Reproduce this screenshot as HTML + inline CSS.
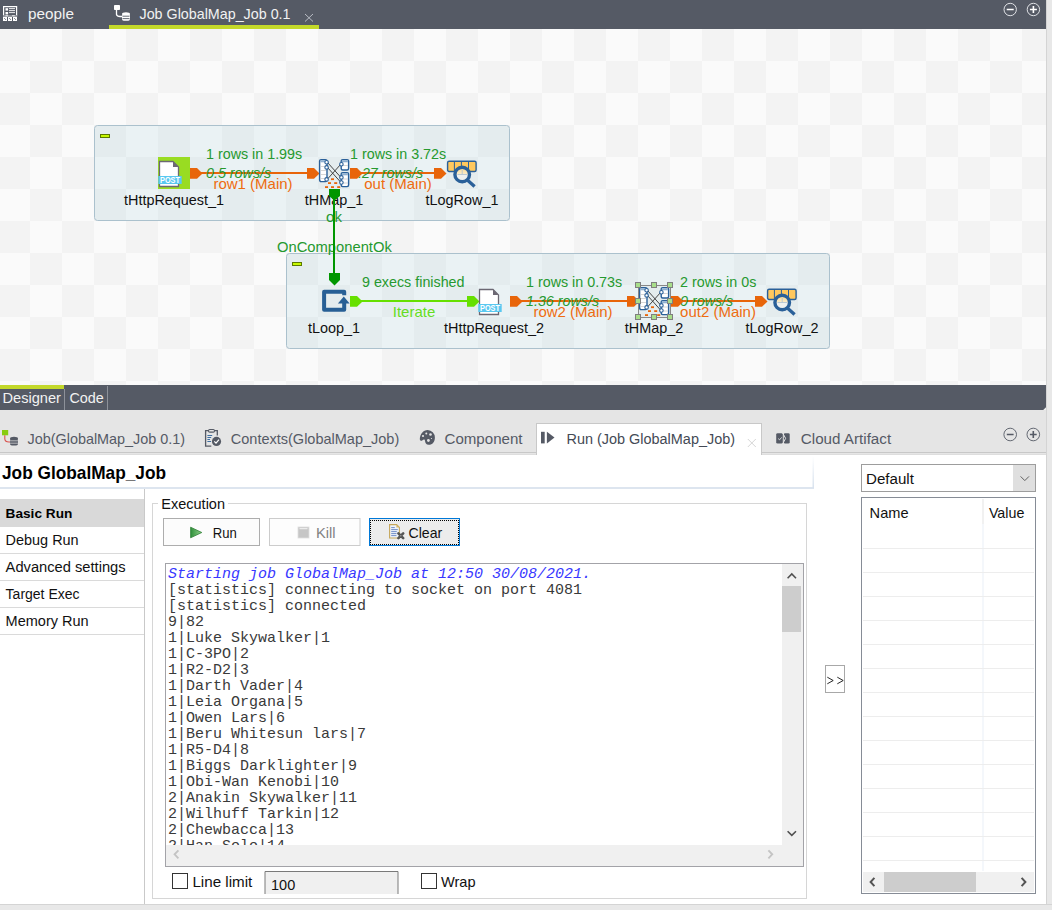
<!DOCTYPE html>
<html><head><meta charset="utf-8">
<style>
*{margin:0;padding:0;box-sizing:border-box}
html,body{width:1052px;height:910px;overflow:hidden;background:#e6e6e6;font-family:"Liberation Sans",sans-serif;position:relative}
.a{position:absolute}
.t{position:absolute;white-space:nowrap;line-height:1}
svg{position:absolute;overflow:visible}
</style></head><body>

<!-- top editor tab bar -->
<div class="a" style="left:0;top:0;width:1046px;height:29px;background:#555a65"></div>
<div class="a" style="left:109px;top:25px;width:210px;height:4px;background:#c3d82a"></div>

<!-- canvas -->
<svg style="left:0;top:29px" width="1046" height="356">
  <defs><pattern id="chk" x="-2" y="0" width="64" height="64" patternUnits="userSpaceOnUse">
    <rect width="64" height="64" fill="#fafafa"/>
    <rect width="32" height="32" fill="#f3f3f3"/><rect x="32" y="32" width="32" height="32" fill="#f3f3f3"/>
  </pattern></defs>
  <rect width="1046" height="356" fill="url(#chk)" shape-rendering="crispEdges"/>
</svg>

<!-- diagram -->
<svg style="left:0;top:0" width="1052" height="910" viewBox="0 0 1052 910">
<g font-family="Liberation Sans">
<!-- subjobs -->
<rect x="94.5" y="125.5" width="415" height="95" rx="3" fill="rgba(172,210,222,0.2)" stroke="#abc1cd"/>
<rect x="100.5" y="134.5" width="9" height="3" fill="#c6f800" stroke="#5c7a00"/>
<rect x="286.5" y="253.5" width="543" height="95" rx="3" fill="rgba(172,210,222,0.2)" stroke="#abc1cd"/>
<rect x="292.5" y="262.5" width="9" height="3" fill="#c6f800" stroke="#5c7a00"/>

<g fill="#e8650a"><rect x="197" y="172" width="115" height="2"/><rect x="357" y="172" width="84" height="2"/><rect x="517" y="300" width="115" height="2"/><rect x="677" y="300" width="84" height="2"/></g>
<g fill="#66e000"><rect x="357" y="300" width="116" height="2"/></g>
<!-- labels row1 -->
<g font-size="14.3" fill="#26992f">
<text x="206" y="159">1 rows in 1.99s</text>
<text x="206" y="178" font-style="italic">0.5 rows/s</text>
<text x="350" y="159">1 rows in 3.72s</text>
<text x="350" y="178" font-style="italic">0.27 rows/s</text>
<text x="362" y="287">9 execs finished</text>
<text x="526" y="287">1 rows in 0.73s</text>
<text x="526" y="306" font-style="italic">1.36 rows/s</text>
<text x="680" y="287">2 rows in 0s</text>
<text x="680" y="306" font-style="italic">0 rows/s</text>
<text x="277" y="252" font-size="14.75">OnComponentOk</text>
<text x="334" y="222" font-size="15" text-anchor="middle">ok</text>
</g>
<g font-size="15" fill="#ee6c10" text-anchor="middle">
<text x="253" y="189">row1 (Main)</text>
<text x="398" y="189">out (Main)</text>
<text x="573" y="317">row2 (Main)</text>
<text x="718" y="317">out2 (Main)</text>
</g>
<text x="414" y="317" font-size="15" fill="#66dd22" text-anchor="middle">Iterate</text>
<g font-size="14.4" fill="#111" text-anchor="middle">
<text x="174" y="205">tHttpRequest_1</text>
<text x="334" y="205">tHMap_1</text>
<text x="462" y="205">tLogRow_1</text>
<text x="334" y="333">tLoop_1</text>
<text x="494" y="333">tHttpRequest_2</text>
<text x="654" y="333">tHMap_2</text>
<text x="782" y="333">tLogRow_2</text>
</g>

<!-- connections -->
<g fill="#e8650a" stroke="none">
<path d="M190 168H197L202.5 173.4L197 178.8H190Z"/>
<path d="M307 168H314L319.5 173.4L314 178.8H307Z"/>
<path d="M350 168H357L362.5 173.4L357 178.8H350Z"/>
<path d="M434 168H441L446.5 173.4L441 178.8H434Z"/>
<path d="M510 296H517L522.5 301.4L517 306.8H510Z"/>
<path d="M627 296H634L639.5 301.4L634 306.8H627Z"/>
<path d="M671 296H678L683.5 301.4L678 306.8H671Z"/>
<path d="M755 296H762L767.5 301.4L762 306.8H755Z"/>
</g>
<g fill="#66e000">
<path d="M350 296H357L362.5 301.4L357 306.8H350Z"/>
<path d="M467 296H474L479.5 301.4L474 306.8H467Z"/>
</g>
<g fill="#009600">
<rect x="333" y="196" width="2" height="80"/>
<path d="M329 189H340V196L334.5 200.5L329 196Z"/>
<path d="M329 273H340V280L334.5 285.5L329 280Z"/>
</g>
</g>
</svg>

<!-- component icons -->
<svg style="left:0;top:0" width="1052" height="910" viewBox="0 0 1052 910">
<defs>
<g id="doc">
  <path d="M1.5 4.5H15L20.5 10V29.5H1.5Z" fill="#fff" stroke="#6c6873" stroke-width="1.3"/>
  <path d="M15 4.5L20.5 10H15Z" fill="#6c6873"/>
  <rect x="0.3" y="19" width="23.4" height="8" fill="#5ac8f0"/>
  <text x="12" y="26.2" font-family="Liberation Sans" font-weight="bold" font-size="8.2" fill="#fff" text-anchor="middle" textLength="20" lengthAdjust="spacingAndGlyphs">POST</text>
</g>
<g id="hmap">
  <rect x="1.6" y="2.6" width="7.4" height="22" rx="1.5" fill="#fff" stroke="#2a6099" stroke-width="1.4"/>
  <rect x="2.3" y="3.3" width="6" height="2" fill="#8fb0d0"/>
  <path d="M2.5 9.5H8M2.5 13.5H8M2.5 17.5H8M2.5 21.5H8" stroke="#ccc" stroke-width="0.8"/>
  <rect x="23.2" y="2.6" width="7.4" height="10.4" rx="1.5" fill="#fff" stroke="#2a6099" stroke-width="1.4"/>
  <rect x="23.9" y="3.3" width="6" height="2" fill="#8fb0d0"/>
  <path d="M24 8.5H30" stroke="#ccc" stroke-width="0.8"/>
  <rect x="23.2" y="15.6" width="7.4" height="14" rx="1.5" fill="#fff" stroke="#2a6099" stroke-width="1.4"/>
  <rect x="23.9" y="16.3" width="6" height="2" fill="#8fb0d0"/>
  <path d="M24 22H30M24 26H30" stroke="#ccc" stroke-width="0.8"/>
  <path d="M9.5 5.5L23 20.5M9.5 10.5L23 25.5M9.5 22L23 7" stroke="#333" stroke-width="0.9"/>
  <g fill="#fff" stroke="#2a6099" stroke-width="1.1"><circle cx="8.6" cy="5.3" r="1.75"/><circle cx="8.6" cy="10.4" r="1.75"/><circle cx="8.6" cy="22.4" r="1.75"/><circle cx="23.4" cy="7.3" r="1.75"/><circle cx="23.4" cy="20.4" r="1.75"/><circle cx="23.4" cy="25.5" r="1.75"/></g>
  <g fill="#e8650a"><rect x="13" y="21.3" width="3" height="1.8"/><rect x="10" y="25.2" width="3" height="1.8"/><rect x="16.2" y="25.2" width="3" height="1.8"/><rect x="7" y="29.2" width="3" height="1.8"/><rect x="13" y="29.2" width="3" height="1.8"/><rect x="19.2" y="29.2" width="3" height="1.8"/></g>
</g>
<g id="logrow">
  <rect x="1.6" y="4.3" width="28.5" height="10.2" rx="1.5" fill="#ffc85e" stroke="#2a6099" stroke-width="1.4"/>
  <path d="M8.4 4.5V14M15.4 4.5V14M22.5 4.5V14" stroke="#2a6099" stroke-width="1"/>
  <linearGradient id="lens" x1="0" y1="0" x2="0" y2="1"><stop offset="0" stop-color="#fcd88a"/><stop offset="0.5" stop-color="#faeccc"/><stop offset="0.52" stop-color="#eef0ef"/><stop offset="1" stop-color="#eef0ef"/></linearGradient>
  <circle cx="16.2" cy="17.5" r="7.3" fill="url(#lens)" stroke="#2a6099" stroke-width="3.4"/>
  <path d="M11.5 17.5H21M16.2 13V17.5" stroke="#a9c0d6" stroke-width="0.8" fill="none"/>
  <path d="M21.3 23L28.6 29.5" stroke="#2a6099" stroke-width="3.3"/>
</g>
<g id="loop">
  <path d="M26.2 10.2V6.8H6.1V24.8H26.2V18" fill="none" stroke="#275f95" stroke-width="4" stroke-linejoin="round"/>
  <path d="M25.8 11.6L31.6 18.4H19.9Z" fill="#275f95"/>
</g>
</defs>
<!-- tHttpRequest_1 -->
<rect x="158" y="157" width="32" height="32" fill="#99dc22"/>
<use href="#doc" x="158" y="157"/>
<use href="#hmap" x="318" y="157"/>
<use href="#logrow" x="446" y="157"/>
<use href="#loop" x="318" y="285"/>
<use href="#doc" x="478" y="285"/>
<use href="#hmap" x="638" y="285"/>
<use href="#logrow" x="766" y="285"/>
<!-- selection handles -->
<g shape-rendering="crispEdges">
<rect x="638" y="285" width="32" height="32" fill="none" stroke="#888" stroke-width="1"/>
<g fill="#a8de8a" stroke="#7f7f7f" stroke-width="1">
<rect x="635.5" y="282.5" width="5" height="5"/><rect x="651.5" y="282.5" width="5" height="5"/><rect x="667.5" y="282.5" width="5" height="5"/>
<rect x="635.5" y="298.5" width="5" height="5"/><rect x="667.5" y="298.5" width="5" height="5"/>
<rect x="635.5" y="314.5" width="5" height="5"/><rect x="651.5" y="314.5" width="5" height="5"/><rect x="667.5" y="314.5" width="5" height="5"/>
</g></g>
</svg>

<!-- Designer / Code bar -->
<div class="a" style="left:0;top:385px;width:1046px;height:25px;background:#555a65"></div>

<!-- bottom panel tab strip -->
<div class="a" style="left:0;top:410px;width:1046px;height:43px;background:#e5e5e5;border-bottom:1px solid #c8c8c8"></div>
<!-- content -->
<div class="a" style="left:0;top:454px;width:1046px;height:450px;background:#fff"></div>
<!-- right strip -->
<div class="a" style="left:1046px;top:0;width:6px;height:910px;background:#e8e8e8;border-left:1px solid #d4d4d4"></div>
<div class="a" style="left:0;top:904px;width:1052px;height:6px;background:#e8e8e8;border-top:1px solid #d4d4d4"></div>

<!-- UI chrome -->
<svg style="left:0;top:0" width="1052" height="910" viewBox="0 0 1052 910">
<g font-family="Liberation Sans">
<!-- top tabs -->
<g fill="none" stroke="#fff" stroke-width="1.2">
  <path d="M3.6 6.6H16.6V15.8H3.6Z"/>
</g>
<g fill="#fff">
  <rect x="5.5" y="8.2" width="2.6" height="2.4"/><rect x="5.5" y="12" width="2.6" height="2.4"/>
  <rect x="9" y="8.2" width="6" height="0.9"/><rect x="9" y="10.2" width="6" height="0.9"/><rect x="9" y="12.2" width="6" height="0.9"/>
  <rect x="3" y="17" width="4" height="4"/><rect x="8" y="17" width="4" height="4"/><rect x="13" y="17" width="4" height="4"/>
</g>
<path d="M4.3 18.2L5.8 19.8M9.3 18.2L10.8 19.8M14.3 18.2L15.8 19.8" stroke="#555a65" stroke-width="0.9"/>
<path d="M3 15.8H5.5M14.8 15.8H17M8 15.8H12" stroke="#555a65" stroke-width="0.8"/>
<text x="28" y="19" font-size="15.3" fill="#f2f2f2">people</text>
<g fill="#fff">
  <rect x="114" y="5" width="6" height="5" rx="0.8"/>
  <path d="M116.5 9.5V14.5Q117 16.5 120 16.5H122.5" fill="none" stroke="#fff" stroke-width="1.3"/>
  <ellipse cx="126" cy="13.9" rx="4" ry="1.7"/>
  <rect x="122" y="13.9" width="8" height="6.8" rx="1.7"/>
  <path d="M122.5 16.2H129.5M122.5 18.6H129.5" stroke="#555a65" stroke-width="0.9"/>
</g>
<text x="139.5" y="18.8" font-size="14.3" fill="#f2f2f2">Job GlobalMap_Job 0.1</text>
<path d="M305 14L313 21.5M313 14L305 21.5" stroke="#b8bcc4" stroke-width="1"/>
<g fill="none" stroke="#e0e2e6" stroke-width="1"><circle cx="1010.2" cy="9.5" r="6.2"/><circle cx="1033.4" cy="9.5" r="6.2"/></g>
<path d="M1006.7 9.5H1013.7M1029.9 9.5H1036.9M1033.4 6V13" stroke="#fff" stroke-width="1.6"/>

<!-- designer/code -->
<rect x="0" y="385" width="64" height="4" fill="#c3d82a"/>
<rect x="64" y="389" width="1" height="21" fill="#8d9199"/>
<rect x="107" y="386" width="1" height="24" fill="#8d9199"/>
<path d="M1046 407.2V410H1043.2Z" fill="#f0f0f0"/>
<text x="2.5" y="403" font-size="14.6" fill="#f2f2f2">Designer</text>
<text x="69.4" y="403" font-size="14.4" fill="#f2f2f2">Code</text>

<!-- bottom tabs -->
<rect x="0" y="454" width="1046" height="1" fill="#dedede"/>
<rect x="536.5" y="423.5" width="225" height="31" fill="#fff" stroke="#c8c8c8"/>
<rect x="537" y="453" width="224" height="2" fill="#fff"/>
<g font-size="14.45" fill="#555a65">
<text x="27.5" y="444" font-size="14.4">Job(GlobalMap_Job 0.1)</text>
<text x="230.8" y="444" font-size="14.5">Contexts(GlobalMap_Job)</text>
<text x="444.5" y="444" font-size="15.1">Component</text>
<text x="566.5" y="444" font-size="14.45" fill="#444a55">Run (Job GlobalMap_Job)</text>
<text x="800.8" y="444" font-size="15.2">Cloud Artifact</text>
</g>
<!-- job icon (bottom) -->
<rect x="2" y="430" width="6.2" height="5.3" fill="#88cc11"/>
<path d="M4.8 435.3V439Q5 442 9 442H11" fill="none" stroke="#d9534f" stroke-width="1.1"/>
<g fill="#555a65"><ellipse cx="14" cy="438.4" rx="4" ry="1.6"/><rect x="10" y="438.4" width="8" height="7.2" rx="1.8"/></g>
<path d="M10 440.8H18M10 443.2H18" stroke="#e5e5e5" stroke-width="0.7"/>
<!-- contexts icon -->
<path d="M211.3 446.2H205.6V430.7H217.3V435.5" fill="none" stroke="#555a65" stroke-width="1.3"/>
<rect x="208.5" y="429.5" width="6" height="2.6" rx="1.2" fill="#e5e5e5" stroke="#555a65" stroke-width="1.1"/>
<path d="M207.4 435.5H212.2M207.4 437.5H211.2M207.4 439.5H210M207.4 441.5H211" stroke="#2a6099" stroke-width="0.9"/>
<circle cx="216.5" cy="441.4" r="4.6" fill="#555a65"/>
<path d="M214.3 441.4L216 443.2L219 439.6" fill="none" stroke="#fff" stroke-width="1.2"/>
<!-- palette icon -->
<path d="M427.7 430A7.6 7.6 0 0 1 434.9 437.5C434.9 442 432.5 444.8 428.8 444.8C426 444.8 425.2 443 425 440.8C424.8 439.2 423.5 439.4 422.5 440.3C421.4 441.4 419.8 440.8 419.8 439C420 434 423.2 430 427.7 430Z" fill="#555a65"/>
<g fill="#e5e5e5"><circle cx="423" cy="436" r="1.1"/><circle cx="426.3" cy="433.5" r="1"/><circle cx="430.5" cy="434.5" r="1.3"/><circle cx="428.4" cy="440.5" r="1.4"/><circle cx="431.5" cy="438.5" r="0.6"/></g>
<!-- run icon -->
<rect x="541" y="431.8" width="3.7" height="11.6" fill="#555a65"/>
<path d="M546.9 431.8L554.5 437.6L546.9 443.4Z" fill="#555a65"/>
<path d="M747.8 439L755.8 447M755.8 439L747.8 447" stroke="#d0d0d0" stroke-width="0.9"/>
<!-- cloud artifact icon -->
<rect x="776.2" y="433.2" width="6.6" height="10.4" rx="1.4" fill="#555a65"/>
<rect x="783.8" y="433.2" width="5.9" height="10.4" rx="1.4" fill="#555a65"/>
<path d="M782.8 433.2L785.6 438.4L782.8 443.6" fill="none" stroke="#e5e5e5" stroke-width="1"/>
<path d="M778.2 438.6L779.6 439.8L781.6 437.4" fill="none" stroke="#e5e5e5" stroke-width="0.9"/>
<!-- min/max bottom -->
<g fill="none" stroke="#555a65" stroke-width="0.9"><circle cx="1010.2" cy="434.5" r="6.3"/><circle cx="1033.3" cy="434.5" r="6.3"/></g>
<path d="M1006.8 434.5H1013.6M1029.9 434.5H1036.7M1033.3 431.1V437.9" stroke="#555a65" stroke-width="1.6"/>
</g>
</svg>

<!-- content -->
<svg style="left:0;top:0" width="1052" height="910" viewBox="0 0 1052 910">
<g font-family="Liberation Sans" fill="#111">
<!-- header -->
<text x="2" y="478.9" font-size="18.4" font-weight="bold" fill="#000" textLength="164" lengthAdjust="spacingAndGlyphs">Job GlobalMap_Job</text>
<defs><linearGradient id="hg" x1="0" y1="0" x2="0" y2="1"><stop offset="0" stop-color="#fff"/><stop offset="1" stop-color="#d8e2ee"/></linearGradient></defs>
<rect x="0" y="487" width="814" height="2" fill="#dde5ef"/>
<rect x="812.5" y="456" width="1.5" height="32" fill="url(#hg)"/>
<!-- left nav -->
<rect x="144" y="489" width="1" height="415" fill="#c9c9c9"/>
<rect x="0" y="499" width="144" height="28" fill="#d9d9d9"/>
<g fill="#dadada"><rect x="0" y="553" width="144" height="1"/><rect x="0" y="580" width="144" height="1"/><rect x="0" y="607" width="144" height="1"/><rect x="0" y="634" width="144" height="1"/></g>
<text x="5.6" y="517.7" font-size="13.65" font-weight="bold" fill="#000">Basic Run</text>
<text x="5.6" y="544.7" font-size="14.45">Debug Run</text>
<text x="5.6" y="571.7" font-size="14.7">Advanced settings</text>
<text x="5.6" y="598.7" font-size="14">Target Exec</text>
<text x="5.6" y="625.7" font-size="14.5">Memory Run</text>
<!-- execution group -->
<rect x="152.5" y="503.5" width="654" height="395" fill="none" stroke="#d6d6d6"/>
<rect x="158" y="500" width="70" height="8" fill="#fff"/>
<text x="161.3" y="509.4" font-size="14.5">Execution</text>
<!-- buttons -->
<rect x="163.5" y="518.5" width="96" height="27" fill="#fcfcfc" stroke="#adadad"/>
<defs><linearGradient id="pg" x1="0" y1="0" x2="1" y2="0"><stop offset="0" stop-color="#2f8f3a"/><stop offset="1" stop-color="#8fd08a"/></linearGradient></defs>
<path d="M190.6 527.2V537.8L201.8 532.5Z" fill="url(#pg)" stroke="#2f7f35" stroke-width="0.8"/>
<text x="212.7" y="538" font-size="14.6" textLength="24" lengthAdjust="spacingAndGlyphs">Run</text>
<rect x="269.5" y="518.5" width="90.5" height="27" fill="#fdfdfd" stroke="#cccccc"/>
<rect x="298" y="527" width="11" height="11" fill="#c6c6c6" stroke="#dedede" stroke-width="0.8"/>
<rect x="299.5" y="528.2" width="8" height="1" fill="#f4f4f4"/>
<text x="316" y="538" font-size="14.7" fill="#838383">Kill</text>
<rect x="369.5" y="518.5" width="90" height="27" fill="#ececec" stroke="#0078d7"/>
<defs><pattern id="dotp" width="2" height="2" patternUnits="userSpaceOnUse"><rect width="1" height="1" fill="#000"/></pattern></defs>
<g fill="url(#dotp)" shape-rendering="crispEdges"><rect x="370" y="520" width="88" height="1"/><rect x="370" y="544" width="88" height="1"/><rect x="370" y="520" width="1" height="25"/><rect x="458" y="520" width="1" height="25"/></g>
<path d="M389.6 524.6H396.6L399.4 527.4V538H389.6Z" fill="#eef3fb" stroke="#c6a75a" stroke-width="1.1"/>
<path d="M396.4 524.6V527.6H399.4Z" fill="#d8b868"/>
<g stroke="#6482c0" stroke-width="0.9"><path d="M391.2 527.6H394.8M391.2 529.6H397.8M391.2 531.6H396.8M391.2 533.6H396.5M391.2 535.6H396.5"/></g>
<path d="M398.4 533.3L403.2 538.1M403.2 533.3L398.4 538.1" stroke="#555" stroke-width="2.6" stroke-linecap="round"/>
<circle cx="400.8" cy="535.7" r="0.8" fill="#999"/>
<text x="408.5" y="538" font-size="14.1">Clear</text>
<!-- console -->
<rect x="165.5" y="563.5" width="638" height="303" fill="#fff" stroke="#a3a3a8"/>
<g font-family="Liberation Mono" font-size="15" fill="#3a3a3a">
<clipPath id="cc"><rect x="166" y="564" width="616" height="281"/></clipPath>
<g clip-path="url(#cc)">
<text x="168" y="578" font-style="italic" fill="#3838ff">Starting job GlobalMap_Job at 12:50 30/08/2021.</text>
<text x="168" y="594">[statistics] connecting to socket on port 4081</text>
<text x="168" y="610">[statistics] connected</text>
<text x="168" y="626">9|82</text>
<text x="168" y="642">1|Luke Skywalker|1</text>
<text x="168" y="658">1|C-3PO|2</text>
<text x="168" y="674">1|R2-D2|3</text>
<text x="168" y="690">1|Darth Vader|4</text>
<text x="168" y="706">1|Leia Organa|5</text>
<text x="168" y="722">1|Owen Lars|6</text>
<text x="168" y="738">1|Beru Whitesun lars|7</text>
<text x="168" y="754">1|R5-D4|8</text>
<text x="168" y="770">1|Biggs Darklighter|9</text>
<text x="168" y="786">1|Obi-Wan Kenobi|10</text>
<text x="168" y="802">2|Anakin Skywalker|11</text>
<text x="168" y="818">2|Wilhuff Tarkin|12</text>
<text x="168" y="834">2|Chewbacca|13</text>
<text x="168" y="850">2|Han Solo|14</text>
</g></g>
<rect x="782" y="564" width="21" height="302" fill="#f0f0f0"/>
<rect x="166" y="845" width="616" height="21" fill="#f0f0f0"/>
<rect x="782" y="586" width="19" height="46" fill="#cdcdcd"/>
<path d="M787.6 578.2L791.8 574L796 578.2" fill="none" stroke="#505050" stroke-width="1.6"/>
<path d="M787.6 831.2L791.8 835.4L796 831.2" fill="none" stroke="#505050" stroke-width="1.6"/>
<path d="M178.4 850.3L174.6 854.3L178.4 858.3" fill="none" stroke="#c4c4c4" stroke-width="1.9"/>
<path d="M768.4 850.3L772.2 854.3L768.4 858.3" fill="none" stroke="#c4c4c4" stroke-width="1.9"/>
<!-- bottom controls -->
<rect x="172.5" y="873.5" width="15" height="15" fill="#fff" stroke="#333"/>
<text x="192.4" y="887" font-size="15.2">Line limit</text>
<rect x="265" y="872" width="133" height="22" fill="#f0f0f0"/>
<path d="M265 894V871.5H398V894" fill="none" stroke="#7a7a7a"/>
<text x="271" y="889.75" font-size="14.5">100</text>
<rect x="421.5" y="873.5" width="15" height="15" fill="#fff" stroke="#333"/>
<text x="441" y="887" font-size="14.6">Wrap</text>
<!-- >> button -->
<rect x="825.5" y="665.5" width="19" height="27" fill="#fff" stroke="#a8a8a8"/>
<path d="M827.3 677.2L833.2 680.5L827.3 683.8M837.3 677.2L843.2 680.5L837.3 683.8" fill="none" stroke="#111" stroke-width="0.9"/>
<!-- combo -->
<rect x="861.5" y="464.5" width="174" height="27" fill="#fff" stroke="#9d9d9d"/>
<rect x="1013" y="465" width="22" height="26" fill="#dfdfdf"/>
<path d="M1020.6 476.4L1024.8 480.6L1029 476.4" fill="none" stroke="#606060" stroke-width="1"/>
<text x="866" y="484" font-size="15.1">Default</text>
<!-- table -->
<rect x="861.5" y="497.5" width="174" height="396" fill="#fff" stroke="#868c96"/>
<rect x="982.5" y="499" width="1" height="25" fill="#e3e3e3"/>
<rect x="982.5" y="524" width="1" height="347" fill="#e9eff7"/>
<g fill="#ededed"><rect x="863" y="548" width="171" height="1"/><rect x="863" y="572" width="171" height="1"/><rect x="863" y="596" width="171" height="1"/><rect x="863" y="620" width="171" height="1"/><rect x="863" y="644" width="171" height="1"/><rect x="863" y="668" width="171" height="1"/><rect x="863" y="692" width="171" height="1"/><rect x="863" y="716" width="171" height="1"/><rect x="863" y="740" width="171" height="1"/><rect x="863" y="764" width="171" height="1"/><rect x="863" y="788" width="171" height="1"/><rect x="863" y="812" width="171" height="1"/><rect x="863" y="836" width="171" height="1"/><rect x="863" y="860" width="171" height="1"/></g>
<text x="869.6" y="517.7" font-size="14.6">Name</text>
<text x="988.9" y="517.7" font-size="14.3">Value</text>
<rect x="863" y="872" width="171" height="20" fill="#f0f0f0"/>
<rect x="884" y="872" width="92" height="20" fill="#cdcdcd"/>
<path d="M874.4 877.8L870.6 882L874.4 886.2" fill="none" stroke="#555" stroke-width="2"/>
<path d="M1021.6 877.8L1025.4 882L1021.6 886.2" fill="none" stroke="#555" stroke-width="2"/>
</g>
</svg>

</body></html>
